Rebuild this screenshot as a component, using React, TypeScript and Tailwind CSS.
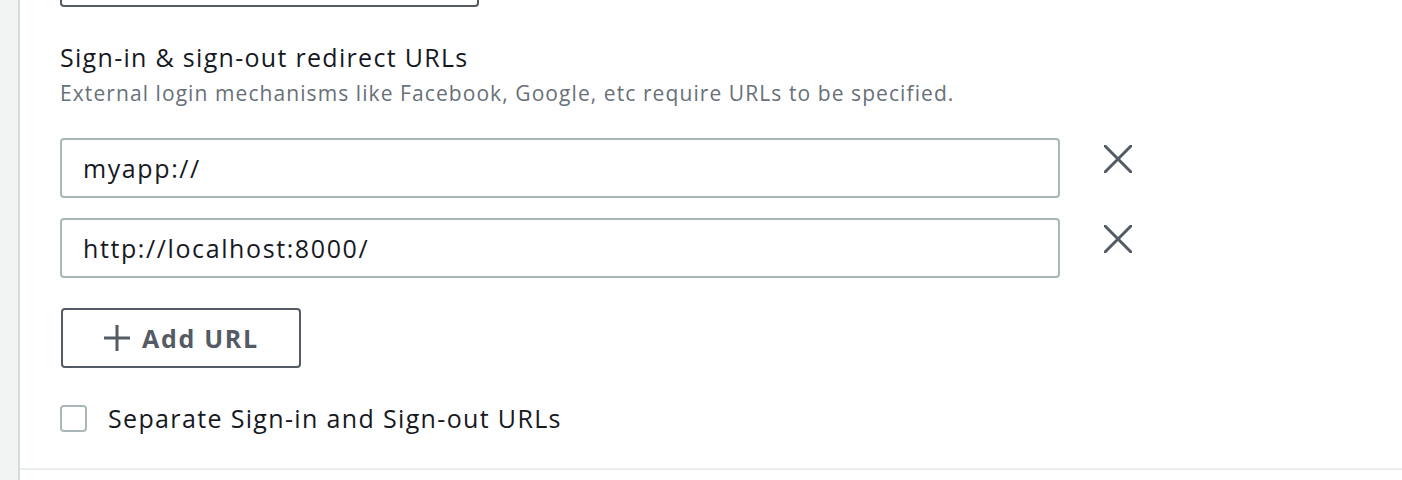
import React from "react";

const XIcon = () => (
  <svg width="28" height="28" viewBox="0 0 28 28" fill="none">
    <path d="M1 1L27 27M27 1L1 27" stroke="#545b64" strokeWidth="3" strokeLinecap="square" />
  </svg>
);

const PlusIcon = () => (
  <svg width="28" height="28" viewBox="0 0 28 28" fill="none">
    <path d="M14 1V27M1 14H27" stroke="#545b64" strokeWidth="3" />
  </svg>
);

function UrlRow({ value }: { value: string }) {
  return (
    <div className="flex items-start">
      <div className="w-[1000px] h-[60px] border-2 border-[#aab7b8] rounded-[4px] flex items-center pl-[21px] text-[25px] leading-[30px] tracking-[1.6px] text-[#16191f]">
        {value}
      </div>
      <div className="ml-[44px] mt-[7px]">
        <XIcon />
      </div>
    </div>
  );
}

export default function App() {
  return (
    <div
      className="w-[1402px] h-[480px] flex bg-white overflow-hidden"
      style={{ fontFamily: '"Open Sans", "Noto Sans", sans-serif' }}
    >
      <div className="w-[20px] h-full bg-[#f2f3f3] border-r-2 border-[#d5dbdb] shrink-0" />
      <div className="flex-1 flex flex-col">
        <div className="pl-[40px] flex-1">
          <div className="w-[419px] h-[50px] mt-[-43px] border-2 border-[#545b64] rounded-[4px]" />
          <div className="mt-[35px] text-[25px] leading-[30px] tracking-[1.3px] text-[#16191f]">
            Sign-in &amp; sign-out redirect URLs
          </div>
          <div className="mt-[8px] text-[21px] leading-[26px] tracking-[1.08px] text-[#687078]">
            External login mechanisms like Facebook, Google, etc require URLs to be specified.
          </div>
          <div className="mt-[32px] flex flex-col gap-[20px]">
            <UrlRow value="myapp://" />
            <UrlRow value="http://localhost:8000/" />
          </div>
          <button className="mt-[30px] ml-[1px] w-[240px] h-[60px] border-2 border-[#545b64] rounded-[4px] flex items-center justify-center gap-[11px] text-[25px] leading-[30px] font-bold tracking-[1.7px] text-[#545b64]">
            <PlusIcon />
            <span>Add URL</span>
          </button>
          <label className="mt-[35px] flex items-center">
            <span className="w-[27px] h-[27px] border-2 border-[#aab7b8] rounded-[4px] bg-white" />
            <span className="ml-[21px] text-[25px] leading-[30px] tracking-[1.35px] text-[#16191f]">
              Separate Sign-in and Sign-out URLs
            </span>
          </label>
        </div>
        <div className="h-[2px] bg-[#eaeded] mb-[10px]" />
      </div>
    </div>
  );
}
